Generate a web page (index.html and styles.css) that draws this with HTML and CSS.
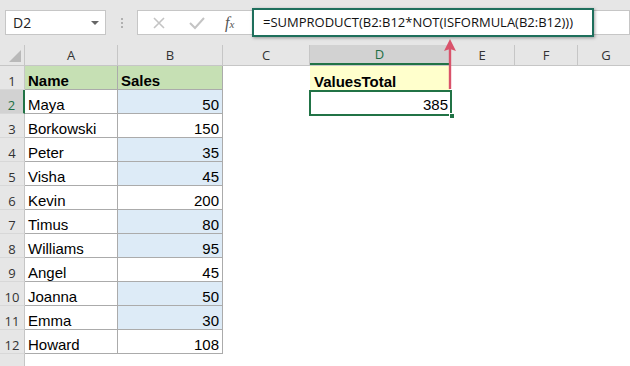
FILE: index.html
```html
<!DOCTYPE html>
<html lang="en">
<head>
    <meta charset="UTF-8">
    <title>Sheet</title>
    <link rel="stylesheet" href="styles.css">
</head>
<body>
    <div class="topbar">
        <div class="namebox">
            <span>D2</span>
            <span class="caret"></span>
        </div>
        <div class="grip"><i></i><i></i><i></i></div>
        <div class="fbuttons">
            <svg width="14" height="14" viewBox="0 0 14 14"><path d="M2 2L12 12M12 2L2 12" stroke="#c4c4c4" stroke-width="1.6" fill="none"/></svg>
            <svg width="16" height="14" viewBox="0 0 16 14"><path d="M1 7L6 12L15 2" stroke="#c4c4c4" stroke-width="2" fill="none"/></svg>
            <span class="fx">f<sub>x</sub></span>
        </div>
        <div class="formulabar">
            <div class="formula">=SUMPRODUCT(B2:B12*NOT(ISFORMULA(B2:B12)))</div>
        </div>
    </div>

    <div class="sheet">
        <div class="row colheads">
            <div class="rh corner"><span class="tri"></span></div>
            <div class="ch ca">A</div>
            <div class="ch cb">B</div>
            <div class="ch cc">C</div>
            <div class="ch cd sel">D</div>
            <div class="ch ce">E</div>
            <div class="ch cf">F</div>
            <div class="ch cg">G</div>
        </div>

        <div class="row">
            <div class="rh">1</div>
            <div class="c ca t head">Name</div>
            <div class="c cb t head">Sales</div>
            <div class="c cc"></div>
            <div class="c cd label">ValuesTotal</div>
            <div class="c ce"></div>
            <div class="c cf"></div>
            <div class="c cg"></div>
        </div>
        <div class="row">
            <div class="rh sel">2</div>
            <div class="c ca t">Maya</div>
            <div class="c cb t num blue">50</div>
            <div class="c cc"></div>
            <div class="c cd num active">385<span class="handle"></span></div>
            <div class="c ce"></div>
            <div class="c cf"></div>
            <div class="c cg"></div>
        </div>
        <div class="row">
            <div class="rh">3</div>
            <div class="c ca t">Borkowski</div>
            <div class="c cb t num">150</div>
            <div class="c cc"></div><div class="c cd"></div><div class="c ce"></div><div class="c cf"></div><div class="c cg"></div>
        </div>
        <div class="row">
            <div class="rh">4</div>
            <div class="c ca t">Peter</div>
            <div class="c cb t num blue">35</div>
            <div class="c cc"></div><div class="c cd"></div><div class="c ce"></div><div class="c cf"></div><div class="c cg"></div>
        </div>
        <div class="row">
            <div class="rh">5</div>
            <div class="c ca t">Visha</div>
            <div class="c cb t num blue">45</div>
            <div class="c cc"></div><div class="c cd"></div><div class="c ce"></div><div class="c cf"></div><div class="c cg"></div>
        </div>
        <div class="row">
            <div class="rh">6</div>
            <div class="c ca t">Kevin</div>
            <div class="c cb t num">200</div>
            <div class="c cc"></div><div class="c cd"></div><div class="c ce"></div><div class="c cf"></div><div class="c cg"></div>
        </div>
        <div class="row">
            <div class="rh">7</div>
            <div class="c ca t">Timus</div>
            <div class="c cb t num blue">80</div>
            <div class="c cc"></div><div class="c cd"></div><div class="c ce"></div><div class="c cf"></div><div class="c cg"></div>
        </div>
        <div class="row">
            <div class="rh">8</div>
            <div class="c ca t">Williams</div>
            <div class="c cb t num blue">95</div>
            <div class="c cc"></div><div class="c cd"></div><div class="c ce"></div><div class="c cf"></div><div class="c cg"></div>
        </div>
        <div class="row">
            <div class="rh">9</div>
            <div class="c ca t">Angel</div>
            <div class="c cb t num">45</div>
            <div class="c cc"></div><div class="c cd"></div><div class="c ce"></div><div class="c cf"></div><div class="c cg"></div>
        </div>
        <div class="row">
            <div class="rh">10</div>
            <div class="c ca t">Joanna</div>
            <div class="c cb t num blue">50</div>
            <div class="c cc"></div><div class="c cd"></div><div class="c ce"></div><div class="c cf"></div><div class="c cg"></div>
        </div>
        <div class="row">
            <div class="rh">11</div>
            <div class="c ca t">Emma</div>
            <div class="c cb t num blue">30</div>
            <div class="c cc"></div><div class="c cd"></div><div class="c ce"></div><div class="c cf"></div><div class="c cg"></div>
        </div>
        <div class="row">
            <div class="rh">12</div>
            <div class="c ca t">Howard</div>
            <div class="c cb t num">108</div>
            <div class="c cc"></div><div class="c cd"></div><div class="c ce"></div><div class="c cf"></div><div class="c cg"></div>
        </div>
        <div class="row">
            <div class="rh"></div>
        </div>
    </div>

    <!-- arrow pointing from D2 up to the formula -->
    <svg class="arrow" width="14" height="52" viewBox="0 0 14 52">
        <path d="M7 8V50" stroke="#d9536b" stroke-width="2.4" fill="none"/>
        <path d="M7 0L13 12L7 10L1 12Z" fill="#d9536b"/>
    </svg>
</body>
</html>
```

FILE: styles.css
```css
* {
    box-sizing: border-box;
}
body {
    margin: 0;
    width: 630px;
    height: 366px;
    overflow: hidden;
    position: relative;
    background: #fff;
    font-family: "Liberation Sans", Arial, sans-serif;
}
.topbar {
    height: 45px;
    background: #e6e6e6;
    display: flex;
    align-items: center;
    padding-left: 5px;
}
.namebox {
    width: 101px;
    height: 25px;
    background: #fff;
    border: 1px solid #c6c6c6;
    display: flex;
    align-items: center;
    justify-content: space-between;
    padding: 0 6px 0 7px;
    font-family: "Open Sans", sans-serif;
    font-size: 14px;
    color: #222;
}
.caret {
    width: 0;
    height: 0;
    border-left: 4px solid transparent;
    border-right: 4px solid transparent;
    border-top: 4px solid #666;
}
.grip {
    width: 31px;
    display: flex;
    flex-direction: column;
    align-items: center;
    gap: 2px;
}
.grip i {
    width: 2px;
    height: 2px;
    background: #b0b0b0;
}
.fbuttons {
    width: 110px;
    height: 25px;
    background: #fff;
    border: 1px solid #c6c6c6;
    border-right: none;
    display: flex;
    align-items: center;
    padding-left: 14px;
    gap: 23px;
}
.fx {
    font-family: "Liberation Serif", serif;
    font-style: italic;
    font-size: 16px;
    color: #555;
    margin-left: -3px;
}
.fx sub {
    font-size: 11px;
    vertical-align: 0;
}
.formulabar {
    flex: 1;
    height: 25px;
    background: #fff;
    border: 1px solid #c6c6c6;
    border-left: none;
    display: flex;
    align-items: center;
    padding-left: 5px;
}
.formula {
    width: 342px;
    height: 29px;
    border: 2px solid #1e6f5c;
    box-shadow: 1px 1px 3px rgba(0, 0, 0, 0.35);
    background: #fff;
    padding-left: 9px;
    font-family: "Open Sans", sans-serif;
    font-size: 13px;
    line-height: 25px;
    color: #111;
    white-space: nowrap;
}

.row {
    display: flex;
    height: 24px;
}
.colheads {
    height: 21px;
    background: #e6e6e6;
    border-bottom: 1px solid #c6c6c6;
}
.rh {
    width: 25px;
    flex: none;
    background: #e6e6e6;
    border-right: 1px solid #c6c6c6;
    border-bottom: 1px solid #d8d8d8;
    font-family: "Open Sans", sans-serif;
    font-size: 13px;
    color: #333;
    display: flex;
    align-items: center;
    justify-content: center;
    padding-top: 6px;
}
.colheads .rh {
    border-bottom: none;
    position: relative;
    padding-top: 0;
}
.tri {
    position: absolute;
    right: 3px;
    bottom: 3px;
    width: 0;
    height: 0;
    border-left: 12px solid transparent;
    border-bottom: 12px solid #b9b9b9;
}
.rh.sel {
    background: #d2d2d2;
    color: #1e6f45;
    border-right: 2px solid #217346;
}
.ch {
    flex: none;
    border-right: 1px solid #c6c6c6;
    font-family: "Open Sans", sans-serif;
    font-size: 13px;
    color: #333;
    display: flex;
    align-items: center;
    justify-content: center;
}
.ch.sel {
    background: #d2d2d2;
    color: #1e6f45;
    border-bottom: 2px solid #217346;
}
.c {
    flex: none;
    font-size: 15px;
    line-height: 17px;
    color: #000;
    display: flex;
    align-items: flex-end;
    padding: 0 3px;
    white-space: nowrap;
}
.ca { width: 93px; }
.cb { width: 105px; }
.cc { width: 87px; }
.cd { width: 140px; }
.ce { width: 65px; }
.cf { width: 63px; }
.cg { width: 57px; }
.t {
    border-right: 1px solid #ababab;
    border-bottom: 1px solid #ababab;
}
.head {
    background: #c6e0b4;
    font-weight: bold;
}
.blue {
    background: #ddebf7;
}
.num {
    justify-content: flex-end;
}
.label {
    background: #ffffcc;
    font-weight: bold;
    padding-left: 4px;
}
.active {
    position: relative;
    padding-right: 2px;
    padding-bottom: 1px;
}
.active::after {
    content: "";
    position: absolute;
    left: -1px;
    right: -2px;
    top: 0;
    bottom: -2px;
    border: 2px solid #217346;
}
.handle {
    position: absolute;
    right: -5px;
    bottom: -5px;
    width: 6px;
    height: 6px;
    background: #217346;
    border: 1px solid #fff;
    z-index: 1;
}
.arrow {
    position: absolute;
    left: 443px;
    top: 39px;
}
```
